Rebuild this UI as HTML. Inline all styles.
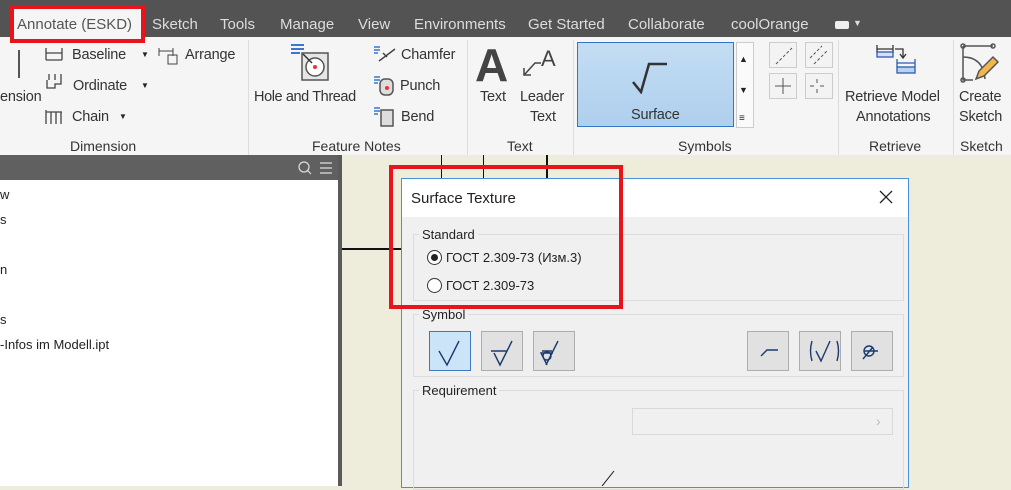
<!DOCTYPE html>
<html><head><meta charset="utf-8"><style>
*{margin:0;padding:0;box-sizing:border-box}
body{width:1011px;height:486px;overflow:hidden;position:relative;background:#eeecda;font-family:"Liberation Sans",sans-serif;font-size:14px;color:#222}
.a{position:absolute;white-space:nowrap}
.tab{position:absolute;top:16px;color:#ddd;font-size:15px}
.rt{font-size:14.5px;color:#333;letter-spacing:-0.2px}
.pt{position:absolute;top:138px;font-size:14px;color:#333}
.sep{position:absolute;top:40px;width:1px;height:115px;background:#dcdcdc}
.sb{position:absolute;width:28px;height:26px;border:1px solid #ccc;background:#f3f3f3}
</style></head><body>
<div class="a" style="left:0;top:0;width:1011px;height:37px;background:#535353"></div>
<div class="a" style="left:12px;top:8px;width:130px;height:30px;background:#f5f5f5"></div>
<div class="tab" style="left:17px;color:#555">Annotate (ESKD)</div>
<div class="tab" style="left:152px">Sketch</div>
<div class="tab" style="left:220px">Tools</div>
<div class="tab" style="left:280px">Manage</div>
<div class="tab" style="left:358px">View</div>
<div class="tab" style="left:414px">Environments</div>
<div class="tab" style="left:528px">Get Started</div>
<div class="tab" style="left:628px">Collaborate</div>
<div class="tab" style="left:731px">coolOrange</div>
<div class="a" style="left:835px;top:21px;width:14px;height:8px;background:#eee;border-radius:2px"></div>
<div class="a" style="left:853px;top:18px;color:#ddd;font-size:9px">▼</div>
<div class="a" style="left:0;top:37px;width:1011px;height:118px;background:#f5f5f5"></div>
<div class="sep" style="left:248px"></div><div class="sep" style="left:467px"></div><div class="sep" style="left:573px"></div><div class="sep" style="left:838px"></div><div class="sep" style="left:953px"></div>
<div class="a rt" style="left:0;top:89px">ension</div>
<div class="a" style="left:18px;top:50px;width:2px;height:28px;background:#555"></div>
<svg class="a" style="left:45px;top:46px" width="30" height="90" fill="none" stroke="#444" stroke-width="1.3">
<path d="M1 2v12M17 2v12M1 7h16M1 14h16"/><path d="M2 34v8h8v-4h6v-8M4 28v6M10 28v6M16 28v6"/><path d="M1 64v14M6 66v12M11 66v12M16 66v12M1 66h16"/></svg>
<div class="a rt" style="left:72px;top:47px">Baseline</div><div class="a" style="left:141px;top:50px;font-size:8px">▼</div>
<div class="a rt" style="left:73px;top:78px">Ordinate</div><div class="a" style="left:141px;top:81px;font-size:8px">▼</div>
<div class="a rt" style="left:72px;top:109px">Chain</div><div class="a" style="left:119px;top:112px;font-size:8px">▼</div>
<svg class="a" style="left:158px;top:46px" width="22" height="20" fill="none" stroke="#444"><path d="M1 2v8M15 2v8M1 5h14"/><rect x="10" y="9" width="9" height="9"/></svg>
<div class="a rt" style="left:185px;top:47px">Arrange</div>
<div class="pt" style="left:70px">Dimension</div>
<svg class="a" style="left:290px;top:43px" width="40" height="40"><path d="M1 2h13M1 6h13M1 10h9" stroke="#3a78d0" stroke-width="2"/><rect x="12" y="10" width="26" height="27" fill="#e6e6e6" stroke="#555" stroke-width="1.5"/><circle cx="25" cy="24" r="9" fill="#fff" stroke="#555" stroke-width="1.5"/><circle cx="25" cy="24" r="2" fill="#e33"/><path d="M13 11l9 9" stroke="#333" stroke-width="1.5"/></svg>
<div class="a rt" style="left:254px;top:89px;letter-spacing:-0.4px">Hole and Thread</div>
<svg class="a" style="left:373px;top:45px" width="24" height="85" fill="none" stroke-width="1.5"><path d="M1 2h6M1 5h6M1 8h4M1 32h6M1 35h6M1 38h4M1 63h6M1 66h6M1 69h4" stroke="#3a78d0"/><path d="M6 16l16-12M10 8l4 4" stroke="#444"/><rect x="7" y="34" width="13" height="16" rx="5" stroke="#555" fill="#ddd"/><circle cx="14" cy="43" r="2" fill="#e33" stroke="none"/><rect x="8" y="65" width="12" height="16" stroke="#555" fill="#ddd"/></svg>
<div class="a rt" style="left:401px;top:47px">Chamfer</div>
<div class="a rt" style="left:400px;top:78px">Punch</div>
<div class="a rt" style="left:401px;top:109px">Bend</div>
<div class="pt" style="left:312px">Feature Notes</div>
<div class="a" style="left:475px;top:38px;font-size:46px;font-weight:bold;color:#444">A</div>
<div class="a" style="left:541px;top:46px;font-size:22px;color:#444">A</div>
<svg class="a" style="left:521px;top:60px" width="22" height="20" fill="none" stroke="#444" stroke-width="1.5"><path d="M20 3h-6L4 14M3 8v7h7"/></svg>
<div class="a rt" style="left:480px;top:89px">Text</div>
<div class="a rt" style="left:520px;top:89px">Leader</div>
<div class="a rt" style="left:530px;top:109px">Text</div>
<div class="pt" style="left:507px">Text</div>
<div class="a" style="left:577px;top:42px;width:157px;height:85px;background:linear-gradient(#c4ddf3,#aecfee);border:1.5px solid #3376c9"></div>
<svg class="a" style="left:630px;top:60px" width="40" height="34" fill="none" stroke="#333" stroke-width="2.5"><path d="M3 22l8 10L19 4h18"/></svg>
<div class="a rt" style="left:631px;top:107px">Surface</div>
<div class="a" style="left:736px;top:42px;width:18px;height:86px;background:#fafafa;border:1px solid #ccc"></div>
<div class="a" style="left:739px;top:54px;font-size:9px">▲</div><div class="a" style="left:739px;top:85px;font-size:9px">▼</div><div class="a" style="left:739px;top:113px;font-size:10px">≡</div>
<div class="sb" style="left:769px;top:42px"></div><div class="sb" style="left:805px;top:42px"></div><div class="sb" style="left:769px;top:73px"></div><div class="sb" style="left:805px;top:73px"></div>
<svg class="a" style="left:769px;top:42px" width="64" height="58" fill="none" stroke="#555"><path d="M7 22l16-16" stroke-dasharray="3 2"/><path d="M41 16l12-12M45 22l14-14" stroke-dasharray="3 2"/><path d="M6 44h16M14 36v16M41 44h4M51 44h4M48 37v4M48 47v4" /></svg>
<div class="pt" style="left:678px">Symbols</div>
<svg class="a" style="left:875px;top:43px" width="42" height="40" stroke="#2a5db0" fill="#b9d2ef" stroke-width="1.3"><path d="M2 2v8M18 2v8M2 6h16" fill="none" stroke="#333"/><rect x="2" y="9" width="16" height="5" fill="#dde"/><path d="M20 6h8v8M25 11l3 4 3-4" fill="none" stroke="#333"/><path d="M22 16v8M40 16v8M22 20h18" fill="none"/><rect x="22" y="24" width="18" height="6"/></svg>
<div class="a rt" style="left:845px;top:89px">Retrieve Model</div>
<div class="a rt" style="left:856px;top:109px">Annotations</div>
<div class="pt" style="left:869px">Retrieve</div>
<svg class="a" style="left:960px;top:43px" width="40" height="40" fill="none" stroke="#555" stroke-width="1.5"><path d="M3 3h30M3 3v34h10M3 14q20 0 22 22"/><circle cx="3" cy="3" r="2"/><circle cx="33" cy="3" r="2"/><circle cx="3" cy="37" r="2"/><path d="M16 36l3-8 14-14 5 5-14 14z" fill="#f2b64a"/></svg>
<div class="a rt" style="left:959px;top:89px">Create</div>
<div class="a rt" style="left:959px;top:109px">Sketch</div>
<div class="pt" style="left:960px">Sketch</div>
<div class="a" style="left:0;top:155px;width:338px;height:25px;background:#606060"></div>
<svg class="a" style="left:296px;top:161px" width="40" height="14" fill="none" stroke="#ddd" stroke-width="1.2"><circle cx="8" cy="6" r="5"/><path d="M11 9l4 4M24 2h12M24 7h12M24 12h12"/></svg>
<div class="a" style="left:0;top:180px;width:338px;height:306px;background:#fff"></div>
<div class="a" style="left:338px;top:155px;width:4px;height:331px;background:#5a5a5a"></div>
<div class="a" style="left:0;top:187px;font-size:13px">w</div>
<div class="a" style="left:0;top:212px;font-size:13px">s</div>
<div class="a" style="left:0;top:262px;font-size:13px">n</div>
<div class="a" style="left:0;top:312px;font-size:13px">s</div>
<div class="a" style="left:0;top:337px;font-size:13px">-Infos im Modell.ipt</div>
<div class="a" style="left:342px;top:248px;width:60px;height:2px;background:#111"></div>
<div class="a" style="left:441px;top:155px;width:1px;height:25px;background:#111"></div>
<div class="a" style="left:483px;top:155px;width:1px;height:25px;background:#111"></div>
<div class="a" style="left:546px;top:155px;width:2px;height:25px;background:#111"></div>
<div class="a" style="left:401px;top:178px;width:508px;height:310px;background:#f0f0f0;border:1px solid #4a90d9"></div>
<div class="a" style="left:402px;top:179px;width:506px;height:38px;background:#fff"></div>
<div class="a" style="left:411px;top:190px;font-size:15px">Surface Texture</div>
<svg class="a" style="left:879px;top:190px" width="14" height="14" stroke="#222" stroke-width="1.3"><path d="M1 1l12 12M13 1L1 13"/></svg>
<div class="a" style="left:413px;top:234px;width:491px;height:67px;border:1px solid #dcdcdc"></div>
<div class="a" style="left:419px;top:227px;background:#f0f0f0;padding:0 3px;font-size:13px">Standard</div>
<div class="a" style="left:427px;top:250px;width:15px;height:15px;border-radius:50%;border:1px solid #333;background:#fff"></div>
<div class="a" style="left:431px;top:254px;width:7px;height:7px;border-radius:50%;background:#222"></div>
<div class="a" style="left:446px;top:250px;font-size:13px">ГОСТ 2.309-73 (Изм.3)</div>
<div class="a" style="left:427px;top:278px;width:15px;height:15px;border-radius:50%;border:1px solid #333;background:#fff"></div>
<div class="a" style="left:446px;top:278px;font-size:13px">ГОСТ 2.309-73</div>
<div class="a" style="left:413px;top:314px;width:491px;height:63px;border:1px solid #dcdcdc"></div>
<div class="a" style="left:419px;top:307px;background:#f0f0f0;padding:0 3px;font-size:13px">Symbol</div>
<div class="a" style="left:429px;top:331px;width:42px;height:40px;background:#cce4f7;border:1px solid #3d7ab8"></div>
<div class="a" style="left:481px;top:331px;width:42px;height:40px;background:#e1e1e1;border:1px solid #adadad"></div>
<div class="a" style="left:533px;top:331px;width:42px;height:40px;background:#e1e1e1;border:1px solid #adadad"></div>
<div class="a" style="left:747px;top:331px;width:42px;height:40px;background:#e1e1e1;border:1px solid #adadad"></div>
<div class="a" style="left:799px;top:331px;width:42px;height:40px;background:#e1e1e1;border:1px solid #adadad"></div>
<div class="a" style="left:851px;top:331px;width:42px;height:40px;background:#e1e1e1;border:1px solid #adadad"></div>
<svg class="a" style="left:429px;top:331px" width="466" height="40" fill="none" stroke="#1c3a6e" stroke-width="1.4">
<path d="M10 20l8 14L30 10"/><path d="M62 20h16M65 22l6 12 12-24"/><path d="M113 20h10M118 34l-6-12h12M117 34l12-24"/><circle cx="118" cy="25" r="4"/>
<path d="M332 25l6-6h11"/><path d="M383 10q-3 10 0 20M408 10q3 10 0 20M387 20l5 10 9-20"/><circle cx="440" cy="20" r="5"/><path d="M435 20h14M434 28l10-12"/></svg>
<div class="a" style="left:413px;top:390px;width:491px;height:100px;border:1px solid #dcdcdc"></div>
<div class="a" style="left:419px;top:383px;background:#f0f0f0;padding:0 3px;font-size:13px">Requirement</div>
<div class="a" style="left:632px;top:408px;width:261px;height:27px;border:1px solid #d9d9d9;background:#f0f0f0"></div>
<div class="a" style="left:876px;top:413px;color:#bbb;font-size:14px">›</div>
<svg class="a" style="left:600px;top:470px" width="16" height="16" stroke="#111"><path d="M2 16L14 1"/></svg>
<div class="a" style="left:10px;top:5px;width:135px;height:38px;border:4px solid #e8141c"></div>
<div class="a" style="left:389px;top:165px;width:234px;height:144px;border:4px solid #e8141c"></div>
</body></html>
